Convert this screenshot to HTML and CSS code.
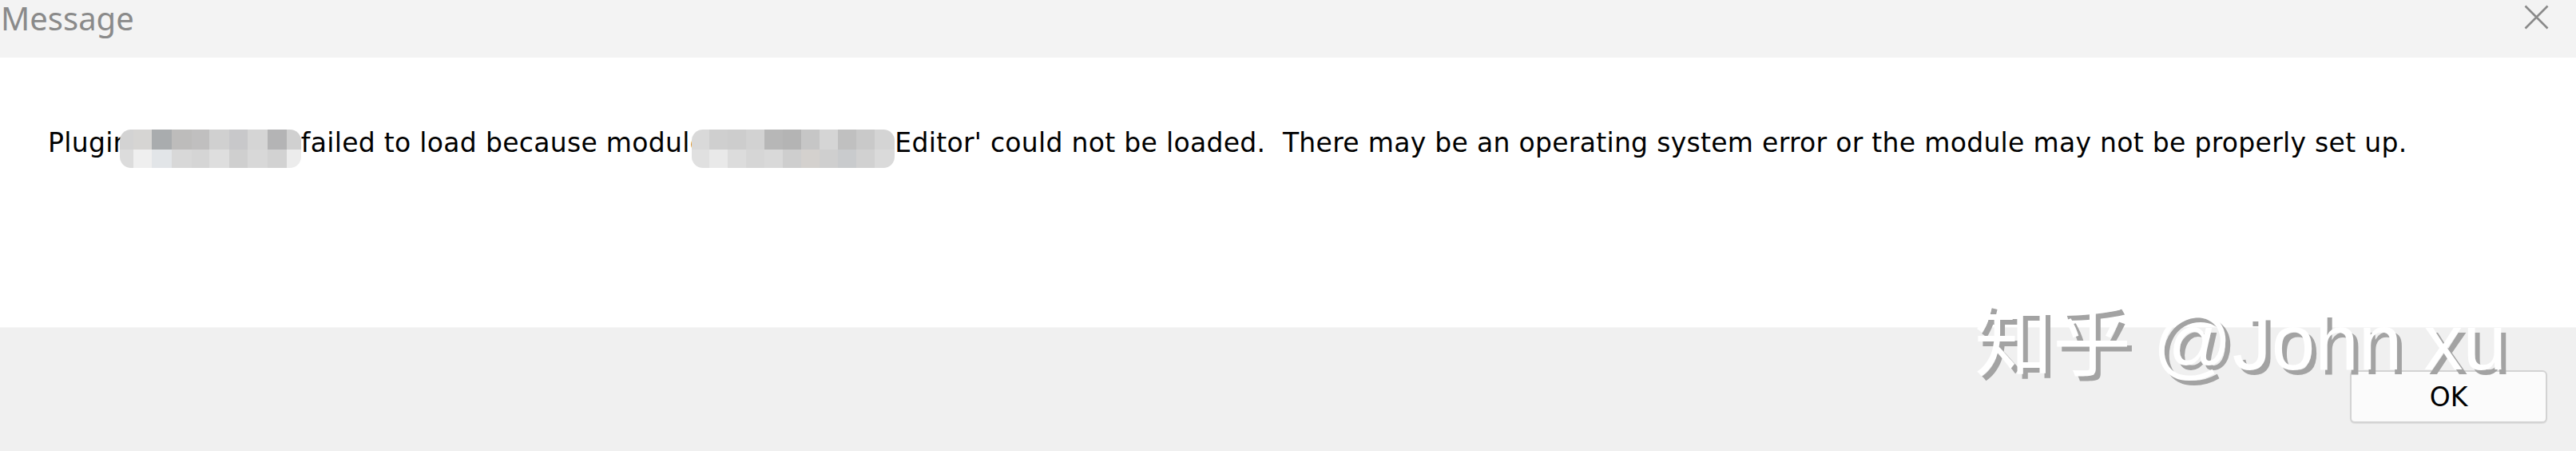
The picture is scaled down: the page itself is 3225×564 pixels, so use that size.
FILE: index.html
```html
<!DOCTYPE html>
<html lang="en">
<head>
    <meta charset="UTF-8">
    <meta name="viewport" content="width=device-width, initial-scale=1.0">
    <title>Message</title>
    <link rel="stylesheet" href="styles.css">
</head>
<body>
    <div class="dialog">
        <div class="titlebar">
            <span class="title">Message</span>
            <button class="close" aria-label="Close">
                <svg width="31" height="31" viewBox="0 0 31 31">
                    <path d="M1.5 1.5 L29.5 29.5 M29.5 1.5 L1.5 29.5" stroke="#8a8a8a" stroke-width="2.6" fill="none"/>
                </svg>
            </button>
        </div>
        <div class="content">
            <p class="msg">Plugin<span class="mosaic m1">
                <i style="background:#d3d3d3"></i><i style="background:#d6d5d3"></i><i style="background:#a9acae"></i><i style="background:#bdbcbb"></i><i style="background:#c0bfbf"></i><i style="background:#d0d0d0"></i><i style="background:#c8c8ca"></i><i style="background:#d5d5d5"></i><i style="background:#b4b4b5"></i><i style="background:#d0d0d0"></i>
                <i style="background:#dcdcdc"></i><i style="background:#efefef"></i><i style="background:#e2e5e8"></i><i style="background:#d8d8d8"></i><i style="background:#d5d5d5"></i><i style="background:#dedede"></i><i style="background:#cfcfcf"></i><i style="background:#d8d8d8"></i><i style="background:#d2d2d2"></i><i style="background:#ececec"></i>
            </span>failed to load because module<span class="mosaic m2">
                <i style="background:#d9d9d9"></i><i style="background:#cfcfcf"></i><i style="background:#cdcdcd"></i><i style="background:#d2d2d2"></i><i style="background:#b7b7b7"></i><i style="background:#b4b4b4"></i><i style="background:#c6c6c6"></i><i style="background:#d5d5d5"></i><i style="background:#c0c0c0"></i><i style="background:#c9c9c9"></i><i style="background:#d4d4d4"></i>
                <i style="background:#e0e0e0"></i><i style="background:#e9e9e9"></i><i style="background:#dcdcdc"></i><i style="background:#d6d6d6"></i><i style="background:#d9d9d9"></i><i style="background:#cecece"></i><i style="background:#d4d1ce"></i><i style="background:#cfcfcf"></i><i style="background:#c9cbcd"></i><i style="background:#d1d1d1"></i><i style="background:#dadada"></i>
            </span>Editor' could not be loaded.&nbsp; There may be an operating system error or the module may not be properly set up.</p>
        </div>
        <div class="footer">
            <button class="ok">OK</button>
        </div>
        <div class="watermark">知乎 @John xu</div>
    </div>
</body>
</html>
```

FILE: styles.css
```css
body {
    margin: 0;
    padding: 0;
    background-color: #f0f0f0;
}

.dialog {
    position: relative;
    width: 3225px;
    height: 564px;
    overflow: hidden;
}

/* title bar */
.titlebar {
    height: 72px;
    background-color: #f3f3f3;
    display: flex;
    justify-content: space-between;
    align-items: flex-start;
}

.title {
    font-family: "Noto Sans", sans-serif;
    font-size: 40px;
    line-height: 45px;
    color: #8a8a8a;
    padding-left: 1px;
}

.close {
    border: none;
    background: none;
    padding: 0;
    margin: 6px 34px 0 0;
    width: 31px;
    height: 31px;
    display: block;
}
.close svg {
    display: block;
}

/* message area */
.content {
    height: 337px;
    background-color: #fff;
    box-sizing: border-box;
    padding: 91px 0 0 60px;
}

.msg {
    margin: 0;
    font-family: "DejaVu Sans", sans-serif;
    font-size: 33px;
    letter-spacing: 0.3px;
    line-height: 31px;
    color: #000;
    white-space: nowrap;
}

/* pixelated patches laid over the hidden names */
.mosaic {
    display: inline-grid;
    grid-template-rows: 25px 23px;
    border-radius: 14px;
    overflow: hidden;
    vertical-align: top;
    margin-top: -1px;
}
.mosaic i {
    display: block;
}
.m1 {
    grid-template-columns: 17px 23px 25px 25px 22px 25px 23px 25px 24px 18px;
    margin-left: -13px;
}
.m2 {
    grid-template-columns: 22px repeat(9, 23px) 25px;
    margin-left: -18px;
}

/* button row */
.footer {
    height: 155px;
    background-color: #f0f0f0;
    border-top: 1px solid #f6f6f6;
    box-sizing: border-box;
    display: flex;
    justify-content: flex-end;
    align-items: flex-start;
    padding: 53px 36px 0 0;
}

.ok {
    width: 247px;
    height: 66px;
    border: 2px solid #d3d3d3;
    border-radius: 6px;
    background-color: #fbfbfb;
    box-shadow: 0 1px 1px rgba(0,0,0,0.08);
    font-family: "DejaVu Sans", sans-serif;
    font-size: 33px;
    color: #000;
    padding: 0;
}

.watermark {
    position: absolute;
    left: 2472px;
    top: 379px;
    font-family: "Liberation Sans", "Noto Sans CJK SC", sans-serif;
    font-size: 98px;
    line-height: 1;
    color: #fff;
    text-shadow: 6px 6px 0 #a3a3a3;
    white-space: nowrap;
}
```
